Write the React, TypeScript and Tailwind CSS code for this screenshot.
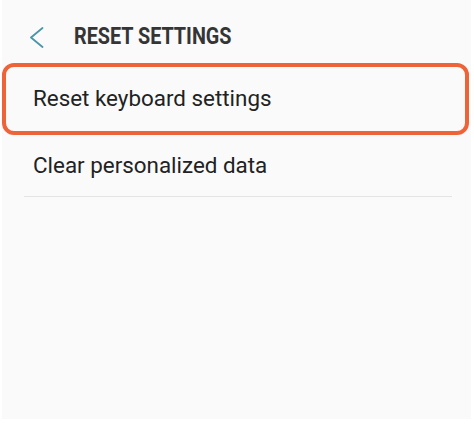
export default function App() {
  return (
    <div className="w-[474px] h-[424px] overflow-hidden bg-white pl-[2px] pr-[3px] pb-[5px]">
      <div className="h-full bg-[#fafafa] font-['Roboto',sans-serif]">
        <div className="h-[63px] pt-[11px] flex items-center">
          <svg
            className="ml-[27px] w-[16px] h-[21px]"
            viewBox="0 0 16 21"
            fill="none"
            stroke="#4a96a8"
            strokeWidth="1.8"
            strokeLinecap="round"
            strokeLinejoin="round"
          >
            <path d="M13.5 1 L2 10.5 L13.5 20" />
          </svg>
          <h1 className="ml-[29px] text-[23px] font-bold text-[#353535] origin-left scale-x-[0.86]">
            RESET SETTINGS
          </h1>
        </div>

        <div className="mr-[2px] h-[72px] flex items-center pl-[27px] border-4 border-[#ee6338] rounded-[12px]">
          <span className="text-[22.4px] text-[#222222]">Reset keyboard settings</span>
        </div>

        <div className="h-[61px] flex items-center pl-[31px]">
          <span className="text-[22.4px] text-[#222222]">Clear personalized data</span>
        </div>
        <div className="ml-[22px] w-[428px] h-px bg-[#e4e4e4]" />
      </div>
    </div>
  );
}
